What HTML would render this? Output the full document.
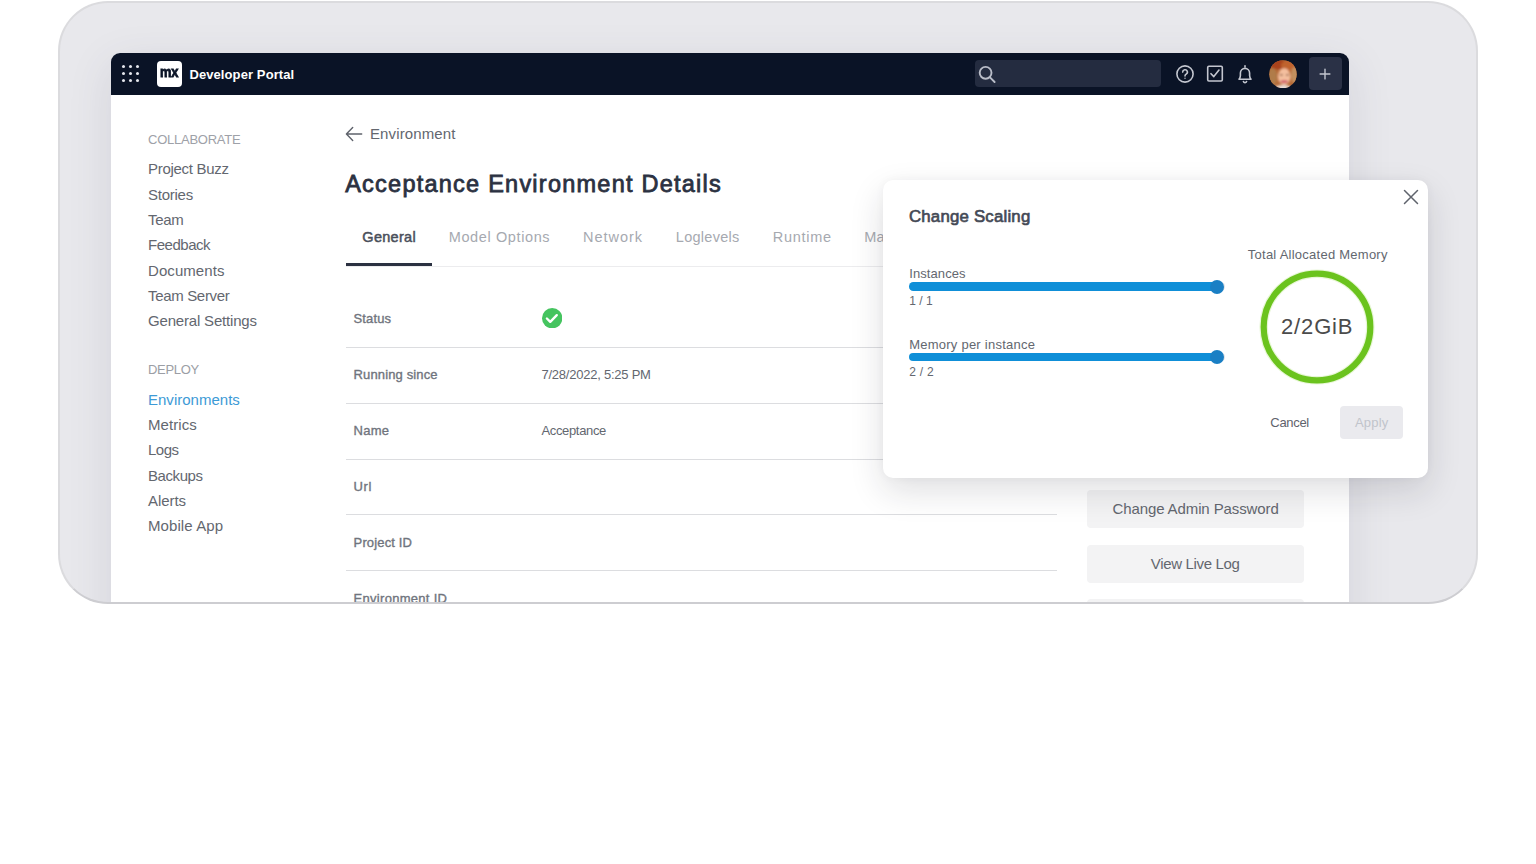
<!DOCTYPE html>
<html lang="en">
<head>
<meta charset="utf-8">
<title>Developer Portal - Acceptance Environment Details</title>
<style>
*{box-sizing:border-box;margin:0;padding:0}
html,body{width:1536px;height:864px;background:#fff;overflow:hidden}
body{font-family:"Liberation Sans",sans-serif;position:relative;color:#5f636c}
.a,.t{position:absolute}
.t{white-space:nowrap;line-height:1}
/* outer rounded card */
#card{position:absolute;left:58px;top:.6px;width:1420px;height:603.7px;border-radius:50px;background:#e8e8ec;border:2px solid #dbdbde;border-bottom-color:#cdcdd1;overflow:hidden}
/* page-coordinate wrapper inside the card (offset = card pos + border) */
#card .page{position:absolute;left:-60px;top:-2.6px;width:1536px;height:864px}
#app{left:111px;top:52.6px;width:1238px;height:600px;background:#fff;border-radius:9px 9px 0 0;box-shadow:0 12px 44px rgba(60,62,95,.125)}
#nav{left:111px;top:52.6px;width:1238px;height:42.8px;background:#0a1326;border-radius:9px 9px 0 0}
.dot{position:absolute;width:3.4px;height:3.4px;border-radius:50%;background:#e4e6ec}
#logo{left:156.9px;top:61.1px;width:25.5px;height:25.6px;border-radius:4px;background:#fff;overflow:hidden}
#logo span{position:absolute;left:3px;top:3.3px;font-size:15.5px;font-weight:700;color:#0a1326;-webkit-text-stroke:.9px #0a1326;line-height:1;transform:scaleX(.83);transform-origin:0 0;letter-spacing:-.2px}
#search{left:975px;top:59.7px;width:186.2px;height:27.4px;border-radius:4px;background:#242c40}
#plus{left:1308.8px;top:57px;width:32.8px;height:33.3px;border-radius:4px;background:#2a3146}
.hr{position:absolute;left:345.6px;width:711.4px;height:1.2px;background:#dcdde0}
.btn{position:absolute;left:1087.3px;width:217px;height:38.4px;border-radius:4px;background:#f3f3f4}
/* modal */
#modal{position:absolute;left:883px;top:179.7px;width:545px;height:298.1px;border-radius:10px;background:#fff;box-shadow:0 13px 34px rgba(30,30,40,.14),0 0 10px rgba(30,30,40,.04)}
.track{position:absolute;left:909px;width:315.5px;height:8.5px;border-radius:4.25px;background:linear-gradient(90deg,#0f8fd8 0,#0f8fd8 309px,#dfe3e8 309px)}
.thumb{position:absolute;left:1210.2px;width:14px;height:14px;border-radius:50%;background:#1a7fc4}
#apply{left:1339.5px;top:405.6px;width:63.9px;height:33.9px;border-radius:4px;background:#eaeaee}
</style>
</head>
<body>
<div id="card"><div class="page">
  <div id="app" class="a"></div>
  <div id="nav" class="a"></div>
  <!-- app-switcher dots -->
  <div class="dot" style="left:121.7px;top:65px"></div><div class="dot" style="left:128.7px;top:65px"></div><div class="dot" style="left:135.6px;top:65px"></div>
  <div class="dot" style="left:121.7px;top:72px"></div><div class="dot" style="left:128.7px;top:72px"></div><div class="dot" style="left:135.6px;top:72px"></div>
  <div class="dot" style="left:121.7px;top:79px"></div><div class="dot" style="left:128.7px;top:79px"></div><div class="dot" style="left:135.6px;top:79px"></div>
  <div id="logo" class="a"><span>mx</span></div>
<span class="t" style="left:189.4px;top:67.7px;font-size:13px;font-weight:700;color:#ffffff;letter-spacing:0.1px">Developer Portal</span>
  <div id="search" class="a"></div>
  <svg class="a" style="left:975.4px;top:62.3px" width="24" height="24" viewBox="0 0 24 24" fill="none" stroke="#b9bdc8" stroke-width="1.9" stroke-linecap="round"><circle cx="10.6" cy="10.8" r="5.9"/><path d="M15 15.4l4.6 4.6"/></svg>
  <!-- help -->
  <svg class="a" style="left:1174.7px;top:63.9px" width="20" height="20" viewBox="0 0 20 20" fill="none" stroke="#c3c6cf" stroke-width="1.6" stroke-linecap="round" stroke-linejoin="round"><circle cx="10" cy="10" r="8.1"/><path d="M7.7 8.1a2.35 2.35 0 1 1 3.5 2.05c-.8.45-1.2.9-1.2 1.75"/><circle cx="10" cy="14.2" r=".7" fill="#c3c6cf" stroke="none"/></svg>
  <!-- tasks -->
  <svg class="a" style="left:1205px;top:63.9px" width="20" height="20" viewBox="0 0 20 20" fill="none" stroke="#c3c6cf" stroke-width="1.6" stroke-linecap="round" stroke-linejoin="round"><rect x="2.7" y="2.2" width="14.6" height="14.8" rx="1.2"/><path d="M6 9.7l2.8 2.9L14 6.1"/></svg>
  <!-- bell -->
  <svg class="a" style="left:1234.7px;top:63.9px" width="20" height="20" viewBox="0 0 20 20" fill="none" stroke="#c3c6cf" stroke-width="1.6" stroke-linecap="round" stroke-linejoin="round"><path d="M10 1.7v1.4"/><path d="M4 15.2c.9-1 1.4-2 1.4-3.6V9a4.6 4.6 0 0 1 9.2 0v2.6c0 1.6.5 2.6 1.4 3.6z"/><path d="M8.4 17.5a1.7 1.7 0 0 0 3.2 0"/></svg>
  <!-- avatar -->
  <svg class="a" style="left:1268.7px;top:59.5px" width="28" height="28.4" viewBox="0 0 28 28.4">
    <defs><clipPath id="avc"><ellipse cx="14" cy="14.2" rx="13.7" ry="14"/></clipPath><filter id="avb" x="-30%" y="-30%" width="160%" height="160%"><feGaussianBlur stdDeviation="1.3"/></filter></defs>
    <g clip-path="url(#avc)">
      <rect width="28" height="29" fill="#b56a36"/>
      <g filter="url(#avb)">
        <ellipse cx="9" cy="4.5" rx="9" ry="5" fill="#a8431a"/>
        <ellipse cx="20" cy="5.5" rx="8" ry="5" fill="#c0642f"/>
        <ellipse cx="3.5" cy="17" rx="4.5" ry="9" fill="#b07c4a"/>
        <ellipse cx="25.5" cy="15" rx="3.5" ry="8" fill="#c2905f"/>
        <ellipse cx="15.2" cy="16.6" rx="6.3" ry="8.4" fill="#f4bf9f"/>
        <ellipse cx="14" cy="28.4" rx="9" ry="3.3" fill="#e9dcd6"/>
        <ellipse cx="15.2" cy="21.6" rx="4" ry="1.6" fill="#d2606b"/>
        <ellipse cx="12.3" cy="14.9" rx="1.6" ry=".8" fill="#8f6046"/><ellipse cx="18.4" cy="14.9" rx="1.6" ry=".8" fill="#8f6046"/>
      </g>
    </g>
  </svg>
  <div id="plus" class="a"></div>
  <svg class="a" style="left:1317.2px;top:65.6px" width="16" height="16" viewBox="0 0 16 16" stroke="#c3c6cf" stroke-width="1.4" stroke-linecap="round"><path d="M8 3.1v9.8M3.1 8h9.8"/></svg>

<span class="t" style="left:148px;top:133px;font-size:13px;color:#9ea1a8;letter-spacing:-0.25px">COLLABORATE</span>
<span class="t" style="left:148px;top:161.2px;font-size:15px;color:#63676f;letter-spacing:-0.3px">Project Buzz</span>
<span class="t" style="left:148px;top:186.6px;font-size:15px;color:#63676f;letter-spacing:-0.25px">Stories</span>
<span class="t" style="left:148px;top:211.9px;font-size:15px;color:#63676f;letter-spacing:-0.33px">Team</span>
<span class="t" style="left:148px;top:237.3px;font-size:15px;color:#63676f;letter-spacing:-0.48px">Feedback</span>
<span class="t" style="left:148px;top:262.7px;font-size:15px;color:#63676f;letter-spacing:0.07px">Documents</span>
<span class="t" style="left:148px;top:288.1px;font-size:15px;color:#63676f;letter-spacing:-0.33px">Team Server</span>
<span class="t" style="left:148px;top:313.4px;font-size:15px;color:#63676f;letter-spacing:-0.18px">General Settings</span>
<span class="t" style="left:148px;top:363.2px;font-size:13px;color:#9b9ea5;letter-spacing:-0.31px">DEPLOY</span>
<span class="t" style="left:148px;top:391.7px;font-size:15px;color:#3d9ad6;letter-spacing:0.01px">Environments</span>
<span class="t" style="left:148px;top:417px;font-size:15px;color:#63676f;letter-spacing:0.06px">Metrics</span>
<span class="t" style="left:148px;top:442.3px;font-size:15px;color:#63676f;letter-spacing:-0.51px">Logs</span>
<span class="t" style="left:148px;top:467.6px;font-size:15px;color:#63676f;letter-spacing:-0.42px">Backups</span>
<span class="t" style="left:148px;top:492.9px;font-size:15px;color:#63676f;letter-spacing:-0.07px">Alerts</span>
<span class="t" style="left:148px;top:518.2px;font-size:15px;color:#63676f;letter-spacing:0.09px">Mobile App</span>
  <!-- back arrow -->
  <svg class="a" style="left:343.6px;top:124.7px" width="20" height="18" viewBox="0 0 20 18" fill="none" stroke="#5f636c" stroke-width="1.4" stroke-linecap="round" stroke-linejoin="round"><path d="M17.7 9H2.6M8.7 2.5L2.4 9l6.3 6.5"/></svg>
  <div class="a" style="left:345.6px;top:265.5px;width:711.4px;height:1.2px;background:#ececee"></div>
  <div class="a" style="left:345.6px;top:262.8px;width:86.4px;height:3px;background:#2b3141"></div>
  <div class="hr" style="top:346.6px"></div>
  <div class="hr" style="top:402.9px"></div>
  <div class="hr" style="top:458.5px"></div>
  <div class="hr" style="top:513.9px"></div>
  <div class="hr" style="top:569.8px"></div>
  <!-- status ok -->
  <svg class="a" style="left:541.5px;top:307.8px" width="20.4" height="20.4" viewBox="0 0 20 20"><circle cx="10" cy="10" r="10" fill="#45c45f"/><path d="M4.8 10.3L8.1 13.6l6.4-6.6" fill="none" stroke="#fff" stroke-width="2.3" stroke-linecap="round" stroke-linejoin="round"/></svg>
  <div class="btn" style="top:490px"></div>
  <div class="btn" style="top:544.9px"></div>
  <div class="btn" style="top:599.4px"></div>
<span class="t" style="left:370px;top:126.3px;font-size:15px;color:#63676f;letter-spacing:0.12px">Environment</span>
<span class="t" style="left:345.2px;top:173.3px;font-size:23.5px;color:#2b3141;letter-spacing:1.24px;-webkit-text-stroke:.8px #2b3141">Acceptance Environment Details</span>
<span class="t" style="left:362.3px;top:229.5px;font-size:14.5px;color:#4a4f5b;letter-spacing:0.3px;-webkit-text-stroke:.5px #4a4f5b">General</span>
<span class="t" style="left:448.7px;top:229.5px;font-size:14.5px;color:#a6a9b0;letter-spacing:0.62px">Model Options</span>
<span class="t" style="left:583px;top:229.5px;font-size:14.5px;color:#a6a9b0;letter-spacing:0.97px">Network</span>
<span class="t" style="left:675.8px;top:229.5px;font-size:14.5px;color:#a6a9b0;letter-spacing:0.28px">Loglevels</span>
<span class="t" style="left:772.7px;top:229.5px;font-size:14.5px;color:#a6a9b0;letter-spacing:0.72px">Runtime</span>
<span class="t" style="left:864.3px;top:229.5px;font-size:14.5px;color:#a6a9b0">Maintenance</span>
<span class="t" style="left:353.6px;top:312px;font-size:13px;color:#70747d;letter-spacing:0.11px;-webkit-text-stroke:.35px #70747d">Status</span>
<span class="t" style="left:353.6px;top:368.3px;font-size:13px;color:#70747d;letter-spacing:0.13px;-webkit-text-stroke:.35px #70747d">Running since</span>
<span class="t" style="left:353.6px;top:423.6px;font-size:13px;color:#70747d;letter-spacing:0.24px;-webkit-text-stroke:.35px #70747d">Name</span>
<span class="t" style="left:353.6px;top:479.5px;font-size:13px;color:#70747d;letter-spacing:0.55px;-webkit-text-stroke:.35px #70747d">Url</span>
<span class="t" style="left:353.6px;top:536px;font-size:13px;color:#70747d;letter-spacing:0.14px;-webkit-text-stroke:.35px #70747d">Project ID</span>
<span class="t" style="left:353.6px;top:592.2px;font-size:13px;color:#70747d;letter-spacing:0.29px;-webkit-text-stroke:.35px #70747d">Environment ID</span>
<span class="t" style="left:541.4px;top:368.3px;font-size:13px;color:#63676f;letter-spacing:-0.23px">7/28/2022, 5:25 PM</span>
<span class="t" style="left:541.4px;top:423.8px;font-size:13px;color:#63676f;letter-spacing:-0.33px">Acceptance</span>
<span class="t" style="left:1112.5px;top:501.1px;font-size:15px;color:#63676f;letter-spacing:-0.11px">Change Admin Password</span>
<span class="t" style="left:1150.8px;top:555.6px;font-size:15px;color:#63676f;letter-spacing:-0.33px">View Live Log</span>
</div></div>

<div id="modal"></div>
<svg class="a" style="left:1403.1px;top:189px" width="16" height="16" viewBox="0 0 16 16" stroke="#5f636c" stroke-width="1.5" stroke-linecap="round"><path d="M1.5 1.5l13 13M14.5 1.5l-13 13"/></svg>
<div class="track" style="top:282.1px"></div><div class="thumb" style="top:279.7px"></div>
<div class="track" style="top:352.9px"></div><div class="thumb" style="top:350.2px"></div>
<svg class="a" style="left:1253.3px;top:263px" width="128" height="128" viewBox="0 0 128 128" fill="none"><circle cx="64" cy="64" r="53.3" stroke="#7ed321" stroke-opacity=".18" stroke-width="8.6"/><circle cx="64" cy="64" r="53.3" stroke="#6bc31e" stroke-width="6.2"/></svg>
<div id="apply" class="a"></div>
<span class="t" style="left:909px;top:209.2px;font-size:16.8px;color:#444955;letter-spacing:0.21px;-webkit-text-stroke:.65px #444955">Change Scaling</span>
<span class="t" style="left:909.2px;top:266.9px;font-size:13px;color:#63676f;letter-spacing:0.09px">Instances</span>
<span class="t" style="left:909.2px;top:294.9px;font-size:12px;color:#63676f;letter-spacing:0.06px">1 / 1</span>
<span class="t" style="left:909.2px;top:337.6px;font-size:13px;color:#63676f;letter-spacing:0.24px">Memory per instance</span>
<span class="t" style="left:909.2px;top:365.8px;font-size:12px;color:#63676f;letter-spacing:0.29px">2 / 2</span>
<span class="t" style="left:1247.8px;top:247.9px;font-size:13px;color:#63676f;letter-spacing:0.25px">Total Allocated Memory</span>
<span class="t" style="left:1281px;top:315.7px;font-size:22px;color:#4b4b4b;letter-spacing:0.85px">2/2GiB</span>
<span class="t" style="left:1270.3px;top:416.3px;font-size:13px;color:#5f636c;letter-spacing:-0.31px">Cancel</span>
<span class="t" style="left:1355px;top:416.2px;font-size:13px;color:#c1c4cb;letter-spacing:0.19px">Apply</span>
</body>
</html>
